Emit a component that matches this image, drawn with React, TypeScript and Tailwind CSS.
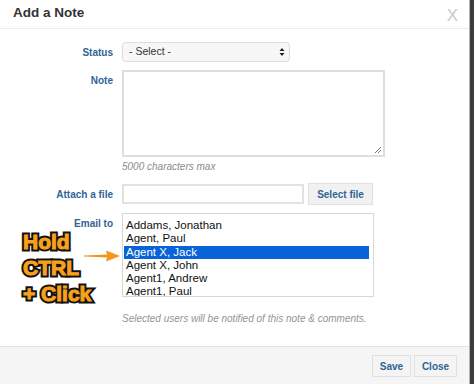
import React from "react";

const blue = "text-[#2f6496]";

function Annotation() {
  const lines = ["Hold", "CTRL", "+ Click"];
  return (
    <div className="absolute left-[23px] top-[229px] text-[21px] leading-[26px] font-bold">
      <div className="flex flex-col text-[#111] [-webkit-text-stroke:5px_#111] [text-shadow:1px_1px_2px_rgba(0,0,0,0.5)]">
        {lines.map((l) => (
          <span key={l}>{l}</span>
        ))}
      </div>
      <div className="absolute left-0 top-0 flex flex-col text-[#f8a11c] [-webkit-text-stroke:1px_#f8a11c]">
        {lines.map((l) => (
          <span key={l}>{l}</span>
        ))}
      </div>
    </div>
  );
}

export default function App() {
  const people = [
    "Addams, Jonathan",
    "Agent, Paul",
    "Agent X, Jack",
    "Agent X, John",
    "Agent1, Andrew",
    "Agent1, Paul",
  ];
  return (
    <div className="w-[474px] h-[384px] flex bg-[#3a3a3a] overflow-hidden font-['Liberation_Sans',Arial,sans-serif]">
      <div className="relative w-[469px] h-[384px] bg-white flex flex-col">
        {/* header */}
        <div className="h-[29px] border-b border-[#ececec] flex items-start justify-between px-[13px]">
          <div className="mt-[5px] text-[13.5px] leading-[16px] font-bold text-[#333]">Add a Note</div>
          <div className="mt-[7px] mr-[-2px] text-[17px] leading-[18px] text-[#c9c9c9]">X</div>
        </div>

        {/* body */}
        <div className="flex flex-col pt-[13px]">
          {/* status */}
          <div className="flex items-center h-[20px]">
            <div className={`w-[113px] text-right text-[10px] font-bold ${blue}`}>Status</div>
            <div className="ml-[9px] w-[168px] h-[20px] rounded-[4px] border border-[#dcdcdc] bg-[#f7f7f7] flex items-center justify-between pl-[6px] pr-[4px]">
              <span className="text-[10.5px] text-[#333]">- Select -</span>
              <svg width="6" height="10" viewBox="0 0 6 10">
                <path d="M3 1 L5.5 4 L0.5 4 Z" fill="#222" />
                <path d="M3 9 L5.5 6 L0.5 6 Z" fill="#222" />
              </svg>
            </div>
          </div>

          {/* note */}
          <div className="flex mt-[8px]">
            <div className={`w-[113px] text-right text-[10px] leading-[12px] pt-[5px] font-bold ${blue}`}>Note</div>
            <div className="relative ml-[9px] w-[263px] h-[87px] border-2 border-[#dedede] bg-white">
              <svg className="absolute right-[1px] bottom-[1px]" width="8" height="8" viewBox="0 0 8 8">
                <path d="M7 1 L1 7 M7 4 L4 7" stroke="#777" strokeWidth="1" />
              </svg>
            </div>
          </div>
          <div className="ml-[122px] mt-[4px] text-[10px] leading-[12px] italic text-[#8a8a8a]">5000 characters max</div>

          {/* attach */}
          <div className="flex items-center mt-[10px] h-[22px]">
            <div className={`w-[113px] text-right text-[10px] font-bold ${blue}`}>Attach a file</div>
            <div className="ml-[9px] w-[182px] h-[20px] border-2 border-[#e2e2e2] bg-white" />
            <div className={`ml-[4px] w-[65px] h-[22px] border border-[#e0e0e0] bg-[#f1f1f1] flex items-center justify-center text-[10px] font-bold ${blue}`}>
              Select file
            </div>
          </div>

          {/* email */}
          <div className="flex mt-[8px]">
            <div className={`w-[113px] text-right text-[10px] leading-[12px] pt-[5px] font-bold ${blue}`}>Email to</div>
            <div className="ml-[9px] w-[252px] h-[84px] border border-[#d6d6d6] bg-white overflow-hidden pt-[5px] pl-[1px] pr-[4px]">
              {people.map((p) => (
                <div
                  key={p}
                  className={
                    p === "Agent X, Jack"
                      ? "h-[13.3px] leading-[13.3px] pl-[2px] text-[11.5px] bg-[#0862d8] text-white"
                      : "h-[13.3px] leading-[13.3px] pl-[2px] text-[11.5px] text-[#111]"
                  }
                >
                  {p}
                </div>
              ))}
            </div>
          </div>
          <div className="ml-[122px] mt-[16px] text-[10px] leading-[12px] italic text-[#949494]">
            Selected users will be notified of this note &amp; comments.
          </div>
        </div>

        {/* footer */}
        <div className="mt-auto h-[38px] border-t border-[#e3e3e3] bg-[#f5f5f5] flex items-center justify-end gap-[3px] pr-[12px] pt-[1px]">
          <div className={`w-[39px] h-[22px] border border-[#e0e0e0] bg-[#f4f4f4] flex items-center justify-center text-[10px] font-bold ${blue}`}>Save</div>
          <div className={`w-[43px] h-[22px] border border-[#e0e0e0] bg-[#f4f4f4] flex items-center justify-center text-[10px] font-bold ${blue}`}>Close</div>
        </div>

        {/* annotation overlay */}
        <Annotation />
        <svg className="absolute left-[83px] top-[249px]" width="38" height="14" viewBox="0 0 38 14">
          <path d="M1 6.6 L24 5.5 L23 1.5 L37 7 L23 12.5 L24 8.5 L1 7.6 Z" fill="#f5961d" />
        </svg>
      </div>
      <div className="w-[1px] h-[384px] bg-[#b5b5b5]" />
      <div className="flex-1 h-[384px] bg-[#3c3c3c]" />
    </div>
  );
}
